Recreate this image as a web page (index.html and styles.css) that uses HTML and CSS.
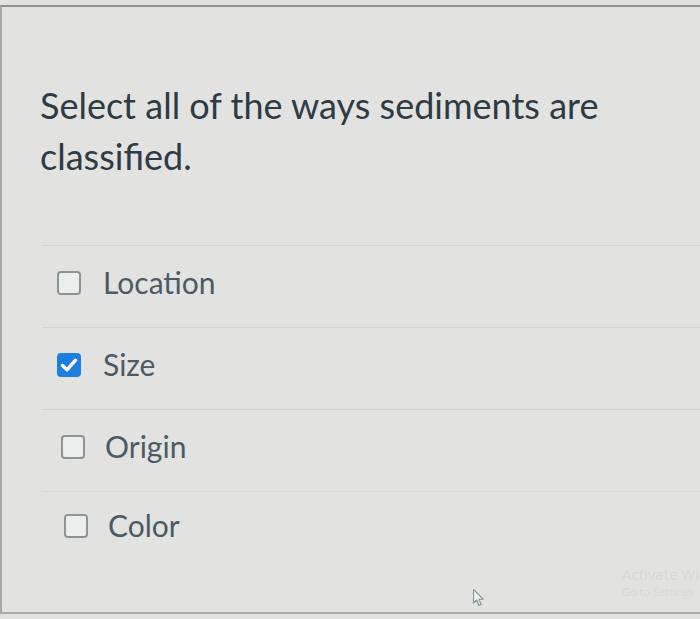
FILE: index.html
```html
<!DOCTYPE html>
<html>
    <head>
        <meta charset="utf-8">
        <title>Quiz Question</title>
        <meta name="viewport" content="width=device-width, initial-scale=1.0">
        <link rel="stylesheet" href="styles.css">
    </head>
    <body>
        <div class="question">
            <p class="question__text">Select all of the ways sediments are classified.</p>
            <ul class="answers">
                <li class="answer">
                    <span class="answer__box"></span>
                    <span class="answer__label">Location</span>
                </li>
                <li class="answer">
                    <span class="answer__box answer__box--checked">
                        <svg viewBox="0 0 24 24" width="24" height="24">
                            <path d="M5.5 12.5 L10 16.8 L18.5 7.2" fill="none" stroke="#fff" stroke-width="3.4" stroke-linecap="round" stroke-linejoin="round"/>
                        </svg>
                    </span>
                    <span class="answer__label">Size</span>
                </li>
                <li class="answer answer--shift">
                    <span class="answer__box"></span>
                    <span class="answer__label">Origin</span>
                </li>
                <li class="answer answer--shift2">
                    <span class="answer__box"></span>
                    <span class="answer__label">Color</span>
                </li>
            </ul>
            <div class="footer">
                <svg class="cursor" viewBox="0 0 14 20" width="14" height="20">
                    <path d="M1.5 1.5 L1.5 15 L4.6 12 L7 17.5 L9.2 16.5 L6.9 11.2 L11.2 11.2 Z" fill="#eef0ee" stroke="#8a9194" stroke-width="1.1" stroke-linejoin="round"/>
                </svg>
                <div class="watermark">
                    <span>Activate Windows</span>
                    <span class="watermark__small">Go to Settings</span>
                </div>
            </div>
        </div>
    </body>
</html>
```

FILE: styles.css
```css
:root {
    --font-main: Lato, 'Open Sans', Arial, sans-serif;

    --color-bg: #e2e3e1;
    --color-line: #d3d5d3;
    --color-border: #8f9394;
    --color-title: #2f3b44;
    --color-text: #4c5a63;
    --color-check: #1e7ee0;
}
html, body {
    margin: 0;
    padding: 0;
    height: 100%;
    background-color: var(--color-bg);
    overflow: hidden;
}
.question {
    font-family: var(--font-main);
    height: 609px;
    margin-top: 5px;
    border-top: 2px solid var(--color-border);
    border-left: 2px solid #a4a8a8;
    border-bottom: 2px solid #a7abab;
    display: flex;
    flex-direction: column;
    box-sizing: border-box;
}
.question__text {
    margin: 73px 60px 0 38px;
    font-size: 36px;
    line-height: 51px;
    color: var(--color-title);
}
.answers {
    list-style: none;
    margin: 63px 0 0 40px;
    padding: 0;
}
.answer {
    display: flex;
    align-items: center;
    gap: 22px;
    height: 82px;
    padding-left: 15px;
    padding-bottom: 8px;
    border-top: 1.5px solid var(--color-line);
    box-sizing: border-box;
}
.answer--shift {
    padding-left: 19px;
    gap: 20px;
}
.answer--shift2 {
    height: 70px;
    padding-left: 22px;
    padding-bottom: 2px;
    gap: 20px;
    border-top-color: #d8dad8;
}
.answer__box {
    width: 24px;
    height: 24px;
    border: 2px solid #8d9396;
    border-radius: 4px;
    box-sizing: border-box;
    background-color: #eceeec;
    flex-shrink: 0;
}
.answer__box--checked {
    border: none;
    background-color: var(--color-check);
    display: flex;
}
.answer__label {
    font-size: 30px;
    color: var(--color-text);
    margin-top: -2px;
}
.footer {
    flex: 1;
    display: flex;
    align-items: flex-end;
    justify-content: flex-end;
}
.cursor {
    margin-right: 136px;
    margin-bottom: 4px;
}
.watermark {
    display: flex;
    flex-direction: column;
    font-family: 'Open Sans', Arial, sans-serif;
    font-size: 15px;
    line-height: 17px;
    color: #d6d8d6;
    width: 78px;
    white-space: nowrap;
    overflow: hidden;
    margin-bottom: 12px;
}
.watermark__small {
    font-size: 11px;
}
```
